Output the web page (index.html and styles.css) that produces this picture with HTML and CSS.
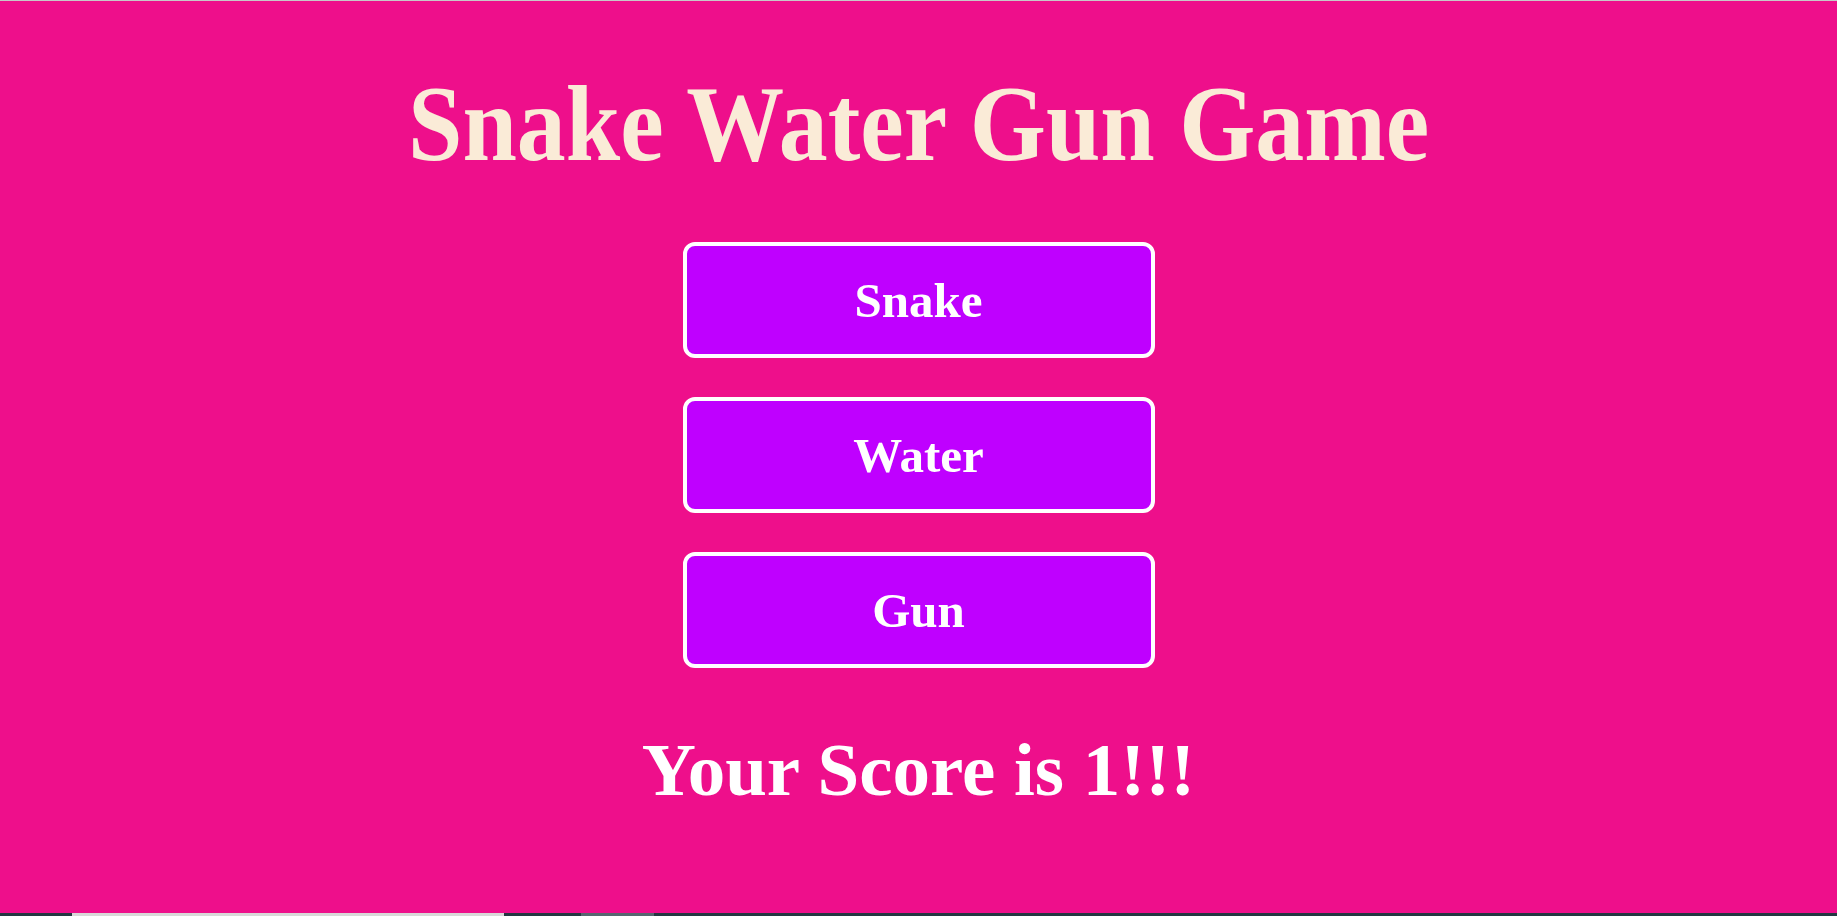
FILE: index.html
```html
<!DOCTYPE html>
<html lang="en">
<head>
  <meta charset="utf-8">
  <title>Snake Water Gun Game</title>
  <link rel="stylesheet" href="styles.css">
</head>
<body>
  <div class="page">
    <h1>Snake Water Gun Game</h1>

    <div class="choices">
      <button class="choice" id="snakeBtn">Snake</button>
      <button class="choice" id="waterBtn">Water</button>
      <button class="choice" id="gunBtn">Gun</button>
    </div>

    <h2 class="score" id="score">Your Score is 1!!!</h2>
  </div>

  <!-- bottom strip -->
  <div class="strip">
    <span class="strip-light"></span>
    <span class="strip-grey"></span>
  </div>
</body>
</html>
```

FILE: styles.css
```css
html, body {
  margin: 0;
  padding: 0;
  height: 100%;
}

body {
  display: flex;
  flex-direction: column;
  background: #ee0f8b;
  border-top: 1px solid #c8c8c8;
  box-sizing: border-box;
  font-family: 'Liberation Serif', 'DejaVu Serif', serif;
}

.page {
  flex: 1;
  display: flex;
  flex-direction: column;
  align-items: center;
}

/* narrow title face */
h1 {
  margin: 0;
  padding-top: 61px;
  font-size: 108px;
  line-height: 1.15;
  font-weight: bold;
  color: #faebd7;
  white-space: nowrap;
  transform: scaleX(0.906);
}

.choices {
  display: flex;
  flex-direction: column;
  gap: 39px;
  margin-top: 56px;
}

.choice {
  width: 472px;
  height: 116px;
  background: #bf00ff;
  border: 4px solid #fff;
  border-radius: 12px;
  font-family: inherit;
  font-size: 49px;
  font-weight: bold;
  color: #fff;
  cursor: pointer;
}

.score {
  margin: 59px 0 0;
  font-size: 75px;
  line-height: 1.15;
  font-weight: bold;
  color: #fff;
}

/* thin dark strip along the bottom edge */
.strip {
  height: 3px;
  background: #243742;
  display: flex;
}

.strip-light {
  width: 432px;
  margin-left: 72px;
  background: #d8d8d8;
}

.strip-grey {
  width: 73px;
  margin-left: 77px;
  background: #566670;
}
```
